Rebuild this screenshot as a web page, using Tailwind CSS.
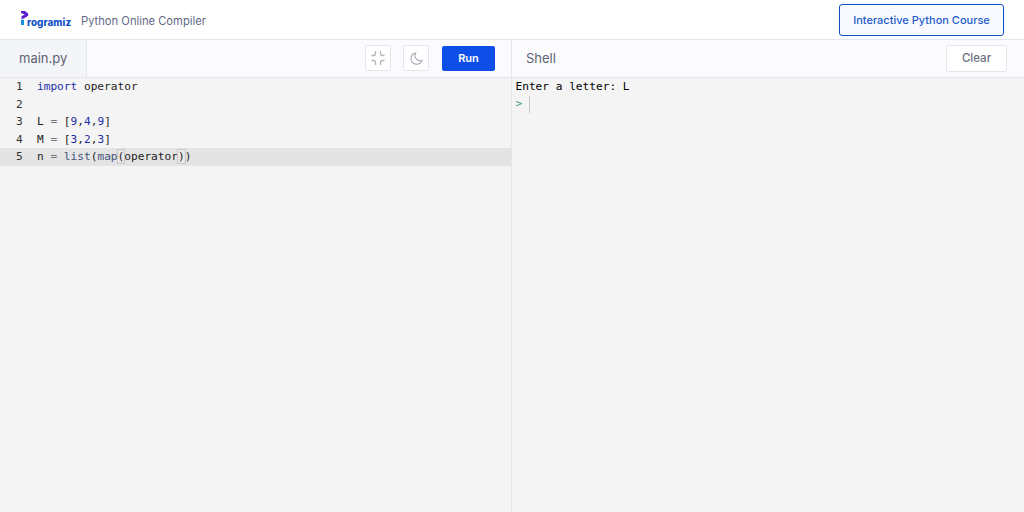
<!DOCTYPE html>
<html>
<head>
<meta charset="utf-8">
<script src="https://cdn.jsdelivr.net/npm/@tailwindcss/browser@4"></script>
</head>
<body class="w-[1024px] h-[512px] overflow-hidden bg-white font-['Inter',sans-serif]">
<header class="h-10 flex items-center justify-between border-b border-[#e3e6ef] bg-white pl-5 pr-5">
  <div class="flex items-center pt-[3px]">
    <div class="flex items-end w-[52px] h-[21px] relative -mt-[3px]">
      <svg class="absolute left-0 top-[1px]" width="10" height="18" viewBox="0 0 10 18"><path d="M1 1 L5 1 Q8.8 3.5 8.4 5 Q7 7.5 1.5 9.2 L1.5 6.2 L4.8 4.6 L1 3 Z" fill="#5b1fd0"/><rect x="1" y="9.8" width="3" height="5.2" fill="#1a8fe0"/></svg>
      <span class="ml-[7px] text-[9.8px] leading-[14px] font-extrabold tracking-[0.1px] text-[#1150c8]">rogramiz</span>
    </div>
    <span class="ml-[9px] text-[11.2px] text-[#5f6a85]">Python Online Compiler</span>
  </div>
  <a class="w-[165px] h-8 flex items-center justify-center rounded-[3px] border border-[#0f4fbf] bg-[#f8faff] text-[11px] font-medium pt-[1px] text-[#1f5bc8]">Interactive Python Course</a>
</header>
<div class="flex h-[472px]">
  <section class="w-[512px] flex flex-col border-r border-[#e3e6ef] bg-[#f4f4f4]">
    <div class="h-[38px] flex items-center border-b border-[#e3e6ef] bg-[#fbfbfd]">
      <div class="w-[87px] h-full flex items-center pl-[19px] border-r border-[#e3e6ef] bg-[#f4f5f8] text-[13px] text-[#5c6274]">main.py</div>
      <div class="flex-1 flex items-center justify-end pr-4 pb-[1px]">
        <button class="w-[26px] h-[26px] flex items-center justify-center border border-[#e3e6ef] bg-white rounded-[2px]">
          <svg width="16" height="16" viewBox="0 0 16 16" fill="none" stroke="#b0b5bf" stroke-width="1.3"><path d="M1.5 5.5 H3.5 Q5.5 5.5 5.5 3.5 V1 M10.5 1 V3.5 Q10.5 5.5 12.5 5.5 H14.5 M1.5 10.5 H3.5 Q5.5 10.5 5.5 12.5 V15 M14.5 10.5 H12.5 Q10.5 10.5 10.5 12.5 V15"/></svg>
        </button>
        <button class="ml-[12px] w-[26px] h-[26px] flex items-center justify-center border border-[#e3e6ef] bg-white rounded-[2px]">
          <svg width="13" height="13" viewBox="0 0 14 14" fill="none" stroke="#a5aab5" stroke-width="1.2"><path d="M6 1.2 A6 6 0 1 0 12.8 9 A5.5 5.5 0 0 1 6 1.2 Z"/></svg>
        </button>
        <button class="ml-[13px] w-[53px] h-[25px] rounded-[2px] bg-[#0f4fe8] text-white text-[11px] font-semibold">Run</button>
      </div>
    </div>
    <div class="flex-1 font-['DejaVu_Sans_Mono',monospace] text-[11.15px] leading-[17.5px] text-[#1d1d1d]">
      <div class="flex h-[17.5px]"><span class="w-[37px] pl-[16px] text-[#333]">1</span><span><span class="text-[#1d2fa8]">import</span> operator</span></div>
      <div class="flex h-[17.5px]"><span class="w-[37px] pl-[16px] text-[#333]">2</span></div>
      <div class="flex h-[17.5px]"><span class="w-[37px] pl-[16px] text-[#333]">3</span><span>L <span class="text-[#777]">=</span> [<span class="text-[#1d2fa8]">9</span>,<span class="text-[#1d2fa8]">4</span>,<span class="text-[#1d2fa8]">9</span>]</span></div>
      <div class="flex h-[17.5px]"><span class="w-[37px] pl-[16px] text-[#333]">4</span><span>M <span class="text-[#777]">=</span> [<span class="text-[#1d2fa8]">3</span>,<span class="text-[#1d2fa8]">2</span>,<span class="text-[#1d2fa8]">3</span>]</span></div>
      <div class="flex h-[17.5px] bg-[#e4e4e4]"><span class="w-[37px] pl-[16px] text-[#333]">5</span><span class="relative">n <span class="text-[#777]">=</span> <span class="text-[#44537a]">list</span>(<span class="text-[#44537a]">map</span><span class="bg-[#e8e8e8] outline outline-[#c8c8c8]">(</span>operator<span class="bg-[#e8e8e8] outline outline-[#c8c8c8]">)</span>)</span></div>
    </div>
  </section>
  <section class="flex-1 flex flex-col bg-[#f4f4f4]">
    <div class="h-[38px] flex items-center justify-between border-b border-[#e3e6ef] bg-[#fbfbfd] pl-[14px] pr-[17px]">
      <span class="text-[13px] text-[#5c6274]">Shell</span>
      <button class="w-[61px] h-[27px] pt-[2px] border border-[#e3e6ef] bg-white rounded-[2px] text-[11.5px] font-medium text-[#6b7080] -mt-[1px]">Clear</button>
    </div>
    <div class="flex-1 pl-[3.5px] font-['DejaVu_Sans_Mono',monospace] text-[11.15px] leading-[17.5px] text-black">
      <div>Enter a letter: L</div>
      <div class="flex items-center h-[17.5px]"><span class="text-[#3d9a8b] w-[13px] pb-[2px]">&gt;</span><span class="h-[17px] border-l border-[#c9c9c9]"></span></div>
    </div>
  </section>
</div>
</body>
</html>
